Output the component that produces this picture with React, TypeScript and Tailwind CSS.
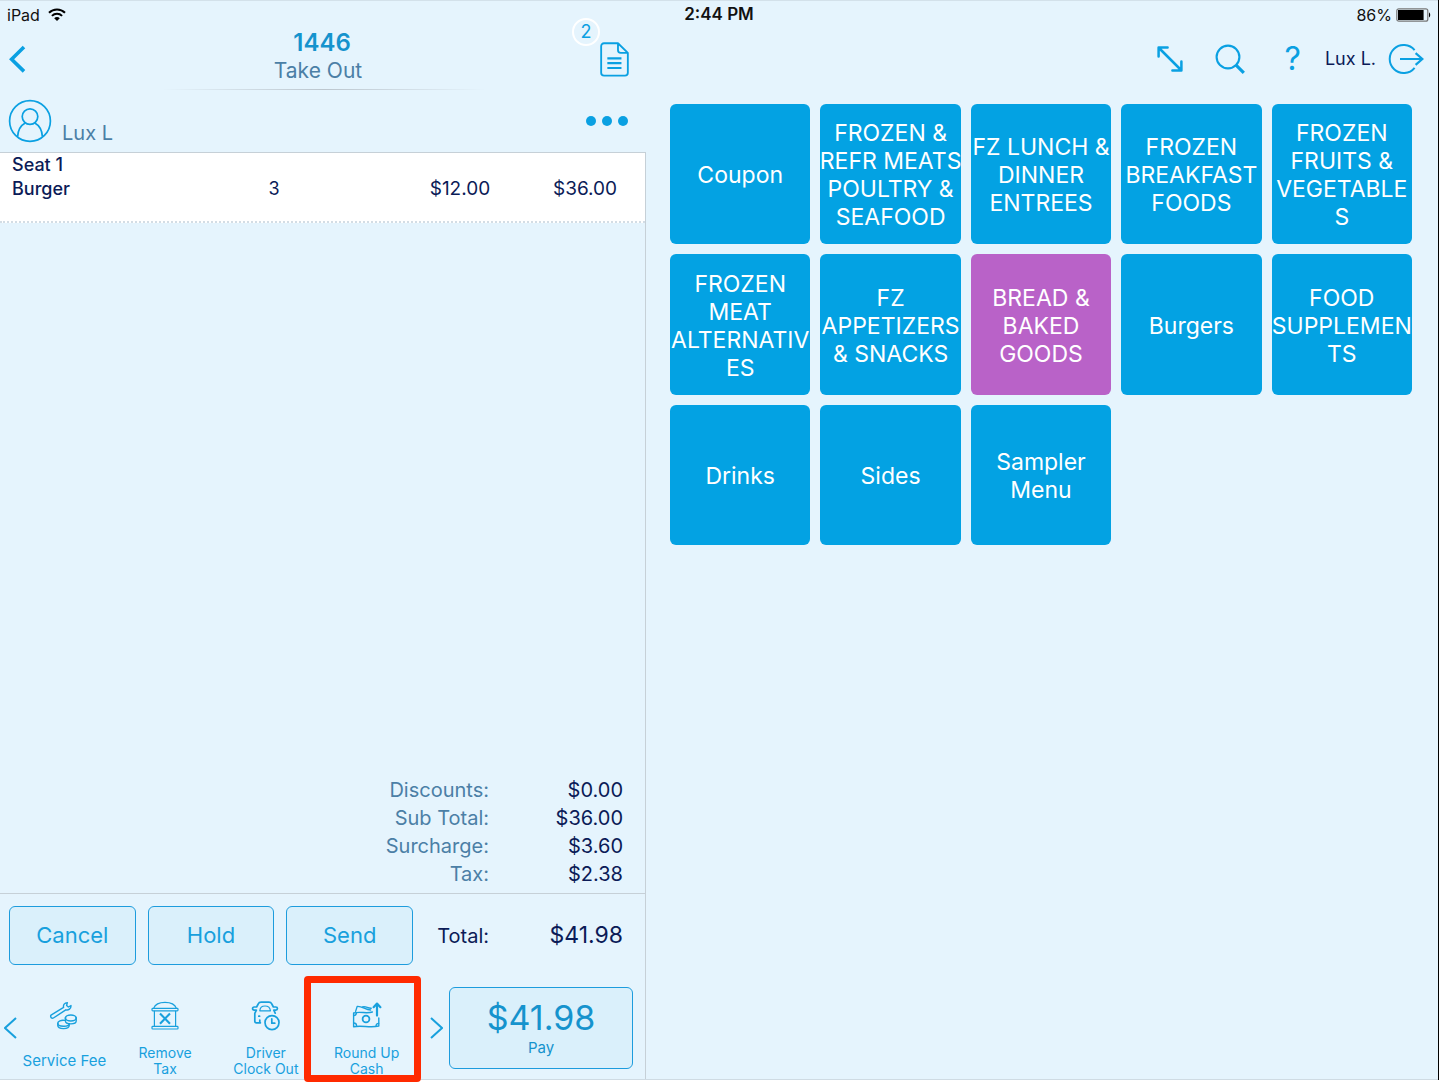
import { useState } from 'react'

type Category = { name: string; selected?: boolean }

const categories: Category[] = [
  { name: 'Coupon' },
  { name: 'FROZEN &\nREFR MEATS\nPOULTRY &\nSEAFOOD' },
  { name: 'FZ LUNCH &\nDINNER\nENTREES' },
  { name: 'FROZEN\nBREAKFAST\nFOODS' },
  { name: 'FROZEN\nFRUITS &\nVEGETABLE\nS' },
  { name: 'FROZEN\nMEAT\nALTERNATIV\nES' },
  { name: 'FZ\nAPPETIZERS\n& SNACKS' },
  { name: 'BREAD &\nBAKED\nGOODS', selected: true },
  { name: 'Burgers' },
  { name: 'FOOD\nSUPPLEMEN\nTS' },
  { name: 'Drinks' },
  { name: 'Sides' },
  { name: 'Sampler\nMenu' },
]

const totals = [
  { label: 'Discounts:', value: '$0.00' },
  { label: 'Sub Total:', value: '$36.00' },
  { label: 'Surcharge:', value: '$3.60' },
  { label: 'Tax:', value: '$2.38' },
]

function ServiceFeeIcon() {
  return (
    <svg width="30" height="30" viewBox="0 0 30 30" fill="none" stroke="currentColor" strokeWidth="1.4" strokeLinejoin="round" strokeLinecap="round">
      <path d="M2.4 13.8 14.6 6.4C14 4 15.4 1.8 18.4 1.6L17.6 4.4 19.4 6 22 4.6C22.2 7.6 19.4 9.6 16.8 8.8L4.4 17C2.2 18.2.8 15 2.4 13.8Z" />
      <ellipse cx="21.8" cy="17" rx="5.4" ry="3" strokeWidth="1.6" />
      <path d="M16.4 17v3c0 3.8 10.8 3.8 10.8 0v-3" />
      <path d="M15.8 19.4c-3.8-.6-7 .8-7 2.8 0 3.8 11 4 11.4.6" />
      <path d="M8.8 22.2v2.4c0 4 11.4 4 11.4 0v-1.8" />
    </svg>
  )
}

function RemoveTaxIcon() {
  return (
    <svg width="30" height="30" viewBox="0 0 30 30" fill="none" stroke="currentColor" strokeWidth="1.2" strokeLinejoin="round">
      <path d="M3.6 7.4C5 3.6 9.6 1.4 15 1.4s10 2.2 11.4 6" />
      <rect x="2" y="7.4" width="26" height="2.4" rx=".8" />
      <path d="M4.4 9.8v15.6M25.6 9.8v15.6" />
      <rect x="2" y="25.4" width="26" height="2.6" rx=".8" />
      <path d="m10 12.4 10 10.4M20 12.4 10 22.8" strokeWidth="2.1" />
    </svg>
  )
}

function DriverIcon() {
  return (
    <svg width="30" height="30" viewBox="0 0 30 30" fill="none" stroke="currentColor" strokeWidth="1.7" strokeLinejoin="round" strokeLinecap="round">
      <path d="M9.4 21.8H5.4c-1 0-1.6-.6-1.6-1.6v-7.8l1.6-3.2H3.2C1 9.2 1 6 3.2 6h2.4l1.6-3C7.8 1.6 9 1.2 10.2 1.2h7.6c1.2 0 2.4.4 3 1.8l1.6 3h2.4c2.2 0 2.2 3.2 0 3.2h-2l1.4 3" />
      <path d="M8.8 9.8c.4-6.4 10-6.4 10.6 0Z" strokeWidth="1.2" />
      <path d="M7.8 15.2h.8M8.8 21v-2" />
      <circle cx="21" cy="21.6" r="7" />
      <path d="M20.8 17.8v4.4h3" />
    </svg>
  )
}

function RoundUpIcon() {
  return (
    <svg width="30" height="30" viewBox="0 0 30 30" fill="none" stroke="currentColor" strokeWidth="1.4" strokeLinejoin="round" strokeLinecap="round">
      <path d="M20.4 11c-6 2-12-.8-18.8 1v13.8c8-2 16 1.4 25.2-.8V17" />
      <path d="M3.6 10.4 5.2 5.4c5-.4 8.2 3.4 13.4 3.6M10.4 6c3-1.4 5.4 1.4 8.8 1.2" />
      <circle cx="14" cy="18" r="3.4" strokeWidth="1.8" />
      <path d="M1.8 14.6c1.8 0 2.4-1 2.6-2.4M1.8 22c1.8 0 2.6.8 2.8 2.6M26.6 22.4c-1.4 0-2.4 1-2.6 2.6" />
      <path d="M25 14.6V3.4M21.6 6.2 25 2.6l3.4 3.6" strokeWidth="2.2" />
    </svg>
  )
}

const actions = [
  { label: 'Service Fee', size: 'text-[15px]', icon: <ServiceFeeIcon /> },
  { label: 'Remove\nTax', size: 'text-sm', icon: <RemoveTaxIcon /> },
  { label: 'Driver\nClock Out', size: 'text-sm', icon: <DriverIcon /> },
  { label: 'Round Up\nCash', size: 'text-sm', icon: <RoundUpIcon />, marked: true },
]

function StatusBar() {
  return (
    <div className="grid h-7 grid-cols-3 items-center border-t border-[#d3e1ea] px-[7px] text-base text-[#111]">
      <div className="flex items-center gap-2">
        iPad
        <svg width="18" height="14" viewBox="0 0 18 14" fill="none" stroke="#000" strokeWidth="2">
          <path d="M1 4.8C5.4.4 12.6.4 17 4.8M3.9 7.9c2.9-2.8 7.3-2.8 10.2 0" />
          <path d="M6.2 10.2c1.6-1.5 4-1.5 5.6 0L9 13Z" fill="#000" stroke="none" />
        </svg>
      </div>
      <div className="text-center text-[17px] font-semibold">2:44 PM</div>
      <div className="flex items-center justify-end gap-1">
        86%
        <svg width="35" height="14" viewBox="0 0 35 14">
          <rect x=".8" y=".8" width="31" height="12.4" rx="2" fill="none" stroke="#777" strokeWidth="1.2" />
          <rect x="2" y="2" width="25.6" height="10" fill="#000" />
          <path d="M33 4.6c1.6.6 1.6 4.2 0 4.8Z" fill="#000" />
        </svg>
      </div>
    </div>
  )
}

function OrderPanel() {
  return (
    <section className="flex flex-col">
      <header className="flex h-[62px] items-center justify-between pr-3.5 pl-2">
        <button aria-label="Back" className="w-10 text-[#0aa0e2]">
          <svg width="20" height="28" viewBox="0 0 20 28" fill="none" stroke="currentColor" strokeWidth="3.6">
            <path d="M16 2 3.6 14.2 16 26.4" />
          </svg>
        </button>
        <div className="relative h-full w-[52%] pt-px text-center">
          <h1 className="pr-1 text-2xl leading-7 font-semibold text-[#1593cd]">1446</h1>
          <p className="pr-3 text-[21px] leading-7 text-[#4b7fa6]">Take Out</p>
          <div className="absolute inset-x-0 bottom-0 h-px bg-linear-to-r from-transparent via-[#bcc6ce] to-transparent" />
        </div>
        <button aria-label="Checks" className="relative w-8 text-[#0aa0e2]">
          <svg width="29" height="35" viewBox="0 0 30 36" fill="none" stroke="currentColor" strokeWidth="1.9" strokeLinejoin="round">
            <path d="M18.6 1.2H4.2c-1.8 0-3 1.2-3 3v27.4c0 1.8 1.2 3 3 3h21.6c1.8 0 3-1.2 3-3V11.2ZM18.6 1.2v7c0 1.8 1 3 2.8 3h7.4" />
            <path d="M7.6 16.8h14.6M7.6 21.8h14.6M7.6 26.8h14.6" strokeWidth="2.2" />
          </svg>
          <span className="absolute -top-6 -left-7 flex size-7 items-center justify-center rounded-full border-2 border-white text-lg">2</span>
        </button>
      </header>

      <div className="flex h-[62px] items-center justify-between pr-4.5 pl-2">
        <div className="flex items-end gap-2.5">
          <svg width="44" height="44" viewBox="0 0 44 44" fill="none" stroke="#0aa0e2" strokeWidth="1.7">
            <circle cx="22" cy="22" r="20.4" />
            <circle cx="22" cy="17.6" r="7.8" />
            <path d="M9.6 37.6C10 31 12.8 26.4 17.2 24M34.4 37.6C34 31 31.2 26.4 26.8 24" />
          </svg>
          <span className="text-xl leading-5 text-[#4b7fa6]">Lux L</span>
        </div>
        <button aria-label="More" className="flex gap-1.5">
          <span className="size-2.5 rounded-full bg-[#0aa0e2]" />
          <span className="size-2.5 rounded-full bg-[#0aa0e2]" />
          <span className="size-2.5 rounded-full bg-[#0aa0e2]" />
        </button>
      </div>

      <div className="flex flex-1 flex-col border-t border-r border-[#c6d0d7]">
        <div className="border-b-2 border-dotted border-[#d3dde5] bg-white pb-5 text-[#0b1b57]">
          <table className="w-full table-fixed text-lg leading-6 font-medium">
            <colgroup>
              <col className="w-[38%]" />
              <col className="w-[9%]" />
              <col className="w-[29%]" />
              <col />
            </colgroup>
            <tbody>
              <tr>
                <th colSpan={4} className="pl-3 text-left font-medium">Seat 1</th>
              </tr>
              <tr>
                <td className="pl-3">Burger</td>
                <td className="text-center font-normal">3</td>
                <td className="text-right text-[19px] font-normal">$12.00</td>
                <td className="pr-7 text-right text-[19px] font-normal">$36.00</td>
              </tr>
            </tbody>
          </table>
        </div>

        <dl className="mt-auto mb-[5px] grid grid-cols-[1fr_134px] pr-[22px] text-right text-xl leading-7">
          {totals.map((t) => (
            <div key={t.label} className="col-span-2 grid grid-cols-subgrid">
              <dt className="text-[#4b7fa6]">{t.label}</dt>
              <dd className="text-[#0b1b57]">{t.value}</dd>
            </div>
          ))}
        </dl>

        <div className="flex items-center border-t border-[#c6d0d7] pt-3 pr-[22px] pl-[9px]">
          <div className="grid flex-1 grid-cols-3 gap-3 text-[22px] text-[#18a0dd]">
            {['Cancel', 'Hold', 'Send'].map((b) => (
              <button key={b} className="h-[59px] rounded-md border border-[#1d9cdd] bg-[#daf0fb]">{b}</button>
            ))}
          </div>
          <span className="w-[76px] text-right text-xl text-[#0b1b57]">Total:</span>
          <span className="w-[134px] text-right text-[23px] text-[#0b1b57]">$41.98</span>
        </div>

        <div className="flex h-[114px] items-center pr-3 text-[#18a0dd]">
          <button aria-label="Previous actions" className="w-3.5 pt-3 pl-1">
            <svg width="13" height="22" viewBox="0 0 13 22" fill="none" stroke="currentColor" strokeWidth="2">
              <path d="M12 1 1 11l11 10" />
            </svg>
          </button>
          <div className="grid h-full flex-1 grid-cols-4">
            {actions.map((a) => (
              <button key={a.label} className={`relative flex flex-col items-center pt-9 leading-4 ${a.size}`}>
                {a.icon}
                <span className="mt-3.5 flex h-8 items-center whitespace-pre">{a.label}</span>
                {a.marked && <span className="absolute top-[11px] -right-1 -bottom-[3px] -left-3 rounded-sm border-[7px] border-[#ff2a00]" />}
              </button>
            ))}
          </div>
          <button aria-label="Next actions" className="mr-1.5 ml-[13px] pt-3">
            <svg width="13" height="22" viewBox="0 0 13 22" fill="none" stroke="currentColor" strokeWidth="2">
              <path d="m1 1 11 10L1 21" />
            </svg>
          </button>
          <button className="mt-3 flex h-[82px] w-[184px] flex-col items-center justify-center rounded-md border border-[#1d9cdd] bg-[#daf0fb] pt-1 text-[#1593cd]">
            <span className="text-[34px] leading-9">$41.98</span>
            <span className="text-[15px] leading-6">Pay</span>
          </button>
        </div>
      </div>
    </section>
  )
}

function MenuPanel() {
  const [active, setActive] = useState(categories.findIndex((c) => c.selected))

  return (
    <section className="pr-[26px] pl-6">
      <header className="-mr-3 flex h-[62px] items-center justify-end text-[#0aa0e2]">
        <button aria-label="Expand">
          <svg width="26" height="26" viewBox="0 0 26 26" fill="none" stroke="currentColor" strokeWidth="2.5" strokeLinejoin="round" strokeLinecap="round">
            <path d="M2 2l22 22M1.6 10.6v-9h9M24.4 15.4v9h-9" />
          </svg>
        </button>
        <button aria-label="Search" className="ml-8">
          <svg width="30" height="30" viewBox="0 0 30 30" fill="none" stroke="currentColor" strokeWidth="2.1">
            <circle cx="13" cy="13" r="11.4" />
            <path d="M20.8 20.8l8 8" strokeWidth="3.2" />
          </svg>
        </button>
        <button className="ml-10 text-[32px] leading-8">?</button>
        <span className="ml-6 text-lg text-[#0b1b57]">Lux L.</span>
        <button aria-label="Sign out" className="ml-3">
          <svg width="36" height="30" viewBox="0 0 36 30" fill="none" stroke="currentColor" strokeWidth="2">
            <path d="M26.6 6.2A14 14 0 1 0 26.6 23.8" />
            <path d="M12 15h22M27.6 9.2l6.8 5.8-6.8 5.8" strokeWidth="2.2" />
          </svg>
        </button>
      </header>
      <div className="mt-3.5 grid grid-cols-5 gap-2.5">
        {categories.map((c, i) => (
          <button
            key={c.name}
            onClick={() => setActive(i)}
            className={`flex aspect-square items-center justify-center rounded-md pt-0.5 text-[23px] leading-7 whitespace-pre text-white ${
              i === active ? 'bg-[#b962c8]' : 'bg-[#03a2e3]'
            }`}
          >
            {c.name}
          </button>
        ))}
      </div>
    </section>
  )
}

export default function App() {
  return (
    <div className="flex min-h-screen flex-col bg-white pb-[3px] font-[Inter,sans-serif]">
      <main className="flex flex-1 flex-col border-r border-black bg-[#e5f4fd]">
        <StatusBar />
        <div className="grid flex-1 grid-cols-[646fr_792fr] border-b border-[#cfdbe3]">
          <OrderPanel />
          <MenuPanel />
        </div>
      </main>
    </div>
  )
}
